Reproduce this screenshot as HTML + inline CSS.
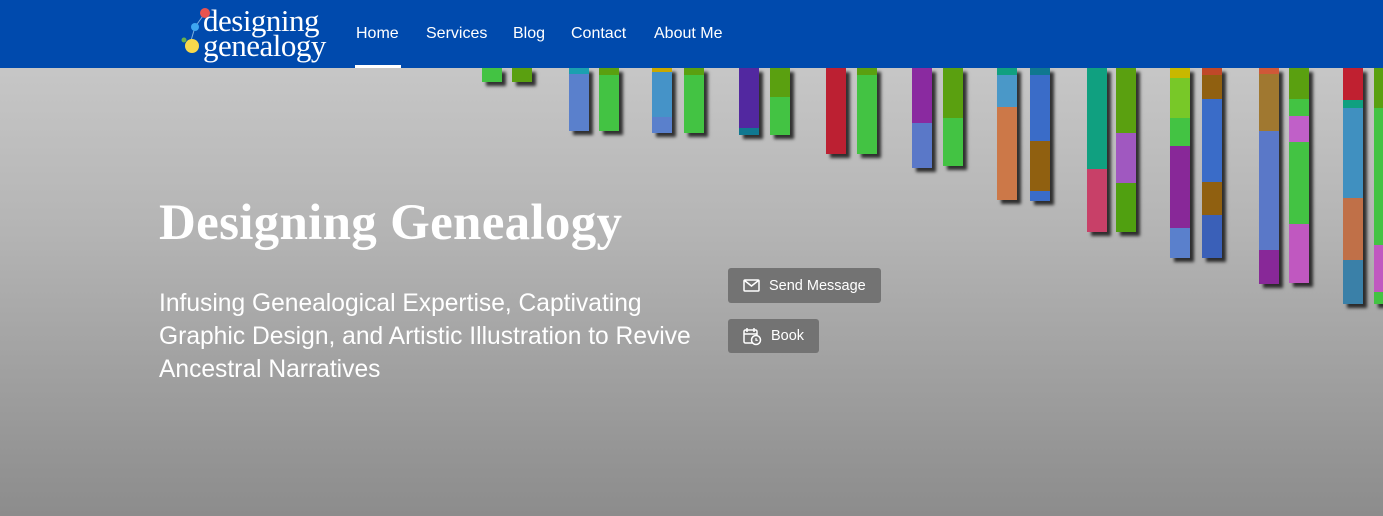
<!DOCTYPE html>
<html><head><meta charset="utf-8"><style>
*{margin:0;padding:0;box-sizing:border-box}
body{width:1383px;height:516px;overflow:hidden;font-family:"Liberation Sans",sans-serif;position:relative;background:linear-gradient(#cecece,#b4b4b4 45%,#8c8c8c)}
nav{position:absolute;left:0;top:0;width:1383px;height:68px;background:#004aad;z-index:5}
.lk{position:absolute;top:25px;color:#fff;font-size:16px}
.bar{position:absolute;top:68px;width:20px;box-shadow:4px 4px 3px rgba(0,0,0,.75);display:flex;flex-direction:column}
.bar div{width:100%}
h1{position:absolute;left:159px;top:194px;font-family:"Liberation Serif",serif;font-weight:bold;font-size:51px;color:#fff;letter-spacing:.3px}
.sub{position:absolute;left:159px;top:287px;font-size:24.6px;line-height:33px;color:#fff}
.btn{position:absolute;background:#737373;border-radius:3px;color:#fff;font-size:14.5px;display:flex;align-items:center}
</style></head><body>
<nav>
<svg style="position:absolute;left:180px;top:0px" width="40" height="62">
<line x1="25" y1="13" x2="15" y2="27" stroke="#7fb0e0" stroke-width="1"/><line x1="15" y1="27" x2="10" y2="44" stroke="#7fb0e0"/>
<circle cx="25" cy="13" r="5" fill="#e8534f"/><circle cx="15" cy="27" r="4" fill="#3ea6f0"/><circle cx="4" cy="40" r="2.5" fill="#6ab04c"/><circle cx="12" cy="46" r="7" fill="#f7d94c"/></svg>
<div style="position:absolute;left:203px;top:8px;color:#fff;font-family:'Liberation Serif',serif;font-size:31px;line-height:25px;letter-spacing:-.5px">designing<br>genealogy</div>
<span class="lk" style="left:356px">Home</span>
<div style="position:absolute;left:355px;top:65px;width:46px;height:3px;background:#fff"></div>
<span class="lk" style="left:426px">Services</span>
<span class="lk" style="left:513px">Blog</span>
<span class="lk" style="left:571px">Contact</span>
<span class="lk" style="left:654px">About Me</span>
</nav>

<div class="bar" style="left:482px;height:14px"><div style="flex:1;background:#43c343"></div></div>
<div class="bar" style="left:512px;height:14px"><div style="flex:1;background:#5aa010"></div></div>
<div class="bar" style="left:569px;height:63px"><div style="height:6px;background:#1aa0b0"></div><div style="flex:1;background:#5a80cc"></div></div>
<div class="bar" style="left:599px;height:63px"><div style="height:7px;background:#5aa010"></div><div style="flex:1;background:#43c343"></div></div>
<div class="bar" style="left:652px;height:65px"><div style="height:4px;background:#c8a800"></div><div style="height:45px;background:#4593c8"></div><div style="flex:1;background:#5a80cc"></div></div>
<div class="bar" style="left:684px;height:65px"><div style="height:7px;background:#5aa010"></div><div style="flex:1;background:#43c343"></div></div>
<div class="bar" style="left:739px;height:67px"><div style="height:60px;background:#5228a0"></div><div style="flex:1;background:#107890"></div></div>
<div class="bar" style="left:770px;height:67px"><div style="height:29px;background:#5aa010"></div><div style="flex:1;background:#43c343"></div></div>
<div class="bar" style="left:826px;height:86px"><div style="flex:1;background:#bc2032"></div></div>
<div class="bar" style="left:857px;height:86px"><div style="height:7px;background:#5aa010"></div><div style="flex:1;background:#43c343"></div></div>
<div class="bar" style="left:912px;height:100px"><div style="height:55px;background:#8a2aa0"></div><div style="flex:1;background:#5a78c8"></div></div>
<div class="bar" style="left:943px;height:98px"><div style="height:50px;background:#5aa010"></div><div style="flex:1;background:#43c343"></div></div>
<div class="bar" style="left:997px;height:132px"><div style="height:7px;background:#10a080"></div><div style="height:32px;background:#4a98c8"></div><div style="flex:1;background:#cc7848"></div></div>
<div class="bar" style="left:1030px;height:133px"><div style="height:7px;background:#107890"></div><div style="height:66px;background:#3a6cc8"></div><div style="height:50px;background:#906010"></div><div style="flex:1;background:#3a6cc8"></div></div>
<div class="bar" style="left:1087px;height:164px"><div style="height:101px;background:#10a080"></div><div style="flex:1;background:#c84068"></div></div>
<div class="bar" style="left:1116px;height:164px"><div style="height:65px;background:#5aa010"></div><div style="height:50px;background:#a058c0"></div><div style="flex:1;background:#50a010"></div></div>
<div class="bar" style="left:1170px;height:190px"><div style="height:10px;background:#c8b800"></div><div style="height:40px;background:#78c828"></div><div style="height:28px;background:#43c343"></div><div style="height:82px;background:#882898"></div><div style="flex:1;background:#5a80cc"></div></div>
<div class="bar" style="left:1202px;height:190px"><div style="height:7px;background:#c04828"></div><div style="height:24px;background:#906010"></div><div style="height:83px;background:#3a6cc8"></div><div style="height:33px;background:#906010"></div><div style="flex:1;background:#3a60b8"></div></div>
<div class="bar" style="left:1259px;height:216px"><div style="height:6px;background:#d05838"></div><div style="height:57px;background:#a07830"></div><div style="height:119px;background:#5a78c8"></div><div style="flex:1;background:#882898"></div></div>
<div class="bar" style="left:1289px;height:215px"><div style="height:31px;background:#5aa010"></div><div style="height:17px;background:#43c343"></div><div style="height:26px;background:#c060c8"></div><div style="height:82px;background:#43c343"></div><div style="flex:1;background:#c058c0"></div></div>
<div class="bar" style="left:1343px;height:236px"><div style="height:32px;background:#c02030"></div><div style="height:8px;background:#10a080"></div><div style="height:90px;background:#4090c0"></div><div style="height:62px;background:#c07048"></div><div style="flex:1;background:#3a80a8"></div></div>
<div class="bar" style="left:1374px;height:236px"><div style="height:40px;background:#5aa010"></div><div style="height:137px;background:#43c343"></div><div style="height:47px;background:#c058c0"></div><div style="flex:1;background:#43c343"></div></div>

<h1>Designing Genealogy</h1>
<div class="sub">Infusing Genealogical Expertise, Captivating<br>Graphic Design, and Artistic Illustration to Revive<br>Ancestral Narratives</div>

<div class="btn" style="left:728px;top:268px;width:153px;height:35px"><svg style="margin:0 9px 0 15px" width="17" height="13" viewBox="0 0 17 13"><rect x="1" y="1" width="15" height="11" rx="1" fill="none" stroke="#fff" stroke-width="1.5"/><path d="M1.5 1.5 L8.5 7 L15.5 1.5" fill="none" stroke="#fff" stroke-width="1.5"/></svg>Send Message</div>
<div class="btn" style="left:728px;top:319px;width:91px;height:34px"><svg style="margin:0 9px 0 15px" width="19" height="19" viewBox="0 0 19 19"><rect x="1" y="3" width="13" height="13" rx="1.5" fill="none" stroke="#fff" stroke-width="1.5"/><path d="M4 1v4M11 1v4M1 7h13" stroke="#fff" stroke-width="1.5"/><circle cx="13" cy="13" r="4.5" fill="#737373" stroke="#fff" stroke-width="1.5"/><path d="M13 11v2.3h1.8" fill="none" stroke="#fff" stroke-width="1.2"/></svg>Book</div>
</body></html>
